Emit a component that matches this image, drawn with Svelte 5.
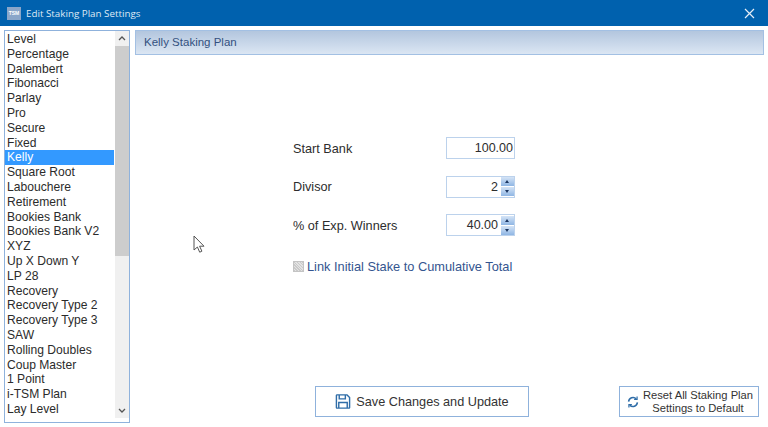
<script>
  const plans = [
    'Level', 'Percentage', 'Dalembert', 'Fibonacci', 'Parlay', 'Pro', 'Secure', 'Fixed',
    'Kelly', 'Square Root', 'Labouchere', 'Retirement', 'Bookies Bank', 'Bookies Bank V2',
    'XYZ', 'Up X Down Y', 'LP 28', 'Recovery', 'Recovery Type 2', 'Recovery Type 3', 'SAW',
    'Rolling Doubles', 'Coup Master', '1 Point', 'i-TSM Plan', 'Lay Level'
  ];
  const selected = 'Kelly';

  const fields = [
    { label: 'Start Bank', value: '100.00', spin: false },
    { label: 'Divisor', value: '2', spin: true },
    { label: '% of Exp. Winners', value: '40.00', spin: true }
  ];
</script>

<div class="window">
  <header class="titlebar">
    <span class="logo">TSM</span>
    <span class="title">Edit Staking Plan Settings</span>
    <svg class="close" width="11" height="11" viewBox="0 0 11 11">
      <path d="M1 1l9 9M10 1l-9 9" stroke="#e6eef7" stroke-width="1.2" fill="none" />
    </svg>
  </header>

  <div class="body">
    <div class="listbox">
      <ul>
        {#each plans as plan}
          <li class:selected={plan === selected}>{plan}</li>
        {/each}
      </ul>
      <div class="scrollbar">
        <svg class="arrow" width="14" height="15" viewBox="0 0 14 15">
          <path d="M4 9l3-3 3 3" stroke="#555" stroke-width="1.3" fill="none" />
        </svg>
        <div class="thumb"></div>
        <div class="track"></div>
        <svg class="arrow" width="14" height="15" viewBox="0 0 14 15">
          <path d="M4 6l3 3 3-3" stroke="#555" stroke-width="1.3" fill="none" />
        </svg>
      </div>
    </div>

    <main class="content">
      <div class="panel-head">Kelly Staking Plan</div>

      <div class="form">
        {#each fields as f}
          <div class="row">
            <span class="label">{f.label}</span>
            <div class="input">
              <span class="value">{f.value}</span>
              {#if f.spin}
                <div class="spin">
                  <span class="up"></span>
                  <span class="down"></span>
                </div>
              {/if}
            </div>
          </div>
        {/each}
        <div class="check">
          <span class="box"></span>
          <span>Link Initial Stake to Cumulative Total</span>
        </div>
      </div>

      <div class="actions">
        <button class="save">
          <svg width="16" height="17" viewBox="0 0 17 17" fill="none" stroke="#2f6da8" stroke-width="1.5">
            <path d="M1.5 2.2a.7.7 0 0 1 .7-.7h10.6l2.7 2.7v10.6a.7.7 0 0 1-.7.7H2.2a.7.7 0 0 1-.7-.7z" />
            <path d="M4.5 1.5v4.2h6.5V1.5" />
            <path d="M4 15.5V9.5h9v6" />
          </svg>
          Save Changes and Update
        </button>
        <button class="reset">
          <svg width="12" height="14" viewBox="0 0 15 16" fill="none" stroke="#2f6da8" stroke-width="1.9">
            <path d="M2 7.5A5.6 5.6 0 0 1 11.5 4" />
            <path d="M13 8.5A5.6 5.6 0 0 1 3.5 12" />
            <path d="M12.6 1v3.8H8.9" stroke-width="1.5" />
            <path d="M2.4 15v-3.8h3.7" stroke-width="1.5" />
          </svg>
          <span>Reset All Staking Plan<br />Settings to Default</span>
        </button>
      </div>
    </main>
  </div>

  <svg class="cursor" width="13" height="19" viewBox="0 0 13 19">
    <path d="M1 1v14l3.4-3 2.3 5.2 2.2-1-2.3-5h4.4z" fill="#fff" stroke="#555" stroke-width="1" />
  </svg>
</div>

<style>
  :global(body) {
    background: #fff;
  }

  .window {
    position: relative;
    width: 768px;
    height: 427px;
    overflow: hidden;
    display: flex;
    flex-direction: column;
    background: #fff;
    font-family: "Liberation Sans", Arial, sans-serif;
  }

  .titlebar {
    height: 26px;
    flex: none;
    display: flex;
    align-items: center;
    padding: 0 13px 0 7px;
    background: #0061ae;
    color: #dfe9f4;
    font-family: "Open Sans", sans-serif;
    font-size: 9.8px;
  }

  .logo {
    width: 14px;
    height: 13px;
    margin-right: 5px;
    background: #8aa6c9;
    color: #fff;
    font-family: "Liberation Sans", sans-serif;
    font-size: 5px;
    font-weight: bold;
    line-height: 13px;
    text-align: center;
  }

  .title {
    flex: 1;
  }

  .body {
    flex: 1;
    min-height: 0;
    display: flex;
    gap: 4px;
    padding: 4px;
  }

  .listbox {
    width: 126px;
    flex: none;
    display: flex;
    border: 1px solid #8fb2dc;
    box-sizing: border-box;
  }

  ul {
    flex: 1;
    margin: 0;
    padding: 1px 1px 0 0;
    list-style: none;
    font-size: 12.1px;
    color: #2b2b2b;
    overflow: hidden;
  }

  li {
    height: 14.8px;
    line-height: 15.6px;
    padding-left: 2px;
  }

  li.selected {
    background: #3399ff;
    color: #fff;
  }

  .scrollbar {
    width: 14px;
    flex: none;
    margin-bottom: 4px;
    display: flex;
    flex-direction: column;
    background: #f0f0f0;
  }

  .arrow {
    flex: none;
  }

  .thumb {
    height: 210px;
    flex: none;
    background: #cdcdcd;
  }

  .track {
    flex: 1;
  }

  .content {
    flex: 1;
    display: flex;
    flex-direction: column;
  }

  .panel-head {
    height: 25px;
    flex: none;
    box-sizing: border-box;
    margin-left: 1px;
    padding-left: 8px;
    line-height: 23px;
    border: 1px solid #a3c0e3;
    background: linear-gradient(#b3c6de, #dbe6f3);
    color: #33517f;
    font-size: 11.5px;
  }

  .form {
    flex: 1;
    width: 222px;
    margin-left: 159px;
    padding-top: 82px;
    display: flex;
    flex-direction: column;
  }

  .row {
    height: 22px;
    margin-bottom: 16.5px;
    display: flex;
    align-items: center;
    justify-content: space-between;
    font-size: 12.7px;
    color: #2d2d2d;
  }

  .label {
    padding-top: 1px;
  }

  .input {
    width: 69px;
    height: 22px;
    box-sizing: border-box;
    display: flex;
    align-items: center;
    justify-content: flex-end;
    gap: 2px;
    padding-right: 0;
    border: 1px solid #bcd2ec;
    font-size: 12.5px;
  }

  .value {
    padding-right: 1px;
  }

  .spin {
    width: 13px;
    height: 19px;
    display: flex;
    flex-direction: column;
    gap: 1px;
  }

  .spin span {
    flex: 1;
    display: block;
    background: linear-gradient(#d5e4f6, #8fb6e4);
    position: relative;
  }

  .spin span::after {
    content: "";
    position: absolute;
    left: 4px;
    top: 3px;
    border-left: 2.5px solid transparent;
    border-right: 2.5px solid transparent;
  }

  .up::after {
    border-bottom: 3px solid #1a3560;
  }

  .down::after {
    border-top: 3px solid #1a3560;
  }

  .check {
    margin-top: 6px;
    display: flex;
    align-items: center;
    gap: 3px;
    font-size: 12.8px;
    color: #34558f;
    white-space: nowrap;
  }

  .box {
    width: 9px;
    height: 9px;
    border: 1px solid #c4c4c4;
    background: repeating-linear-gradient(45deg, #c9c9c9 0 1px, #e3e3e3 1px 2px);
  }

  .actions {
    flex: none;
    display: flex;
    justify-content: space-between;
    margin: 0 5px 6px 181px;
  }

  button {
    height: 31px;
    box-sizing: border-box;
    display: flex;
    align-items: center;
    justify-content: center;
    background: #fff;
    border: 1px solid #8fb2dc;
    color: #333;
    font-family: inherit;
    padding: 0;
  }

  .save {
    width: 214px;
    gap: 5px;
    font-size: 12.7px;
  }

  .reset {
    width: 140px;
    gap: 4px;
    padding-left: 2px;
    font-size: 11.2px;
    line-height: 13px;
    text-align: center;
  }

  .cursor {
    position: absolute;
    left: 193px;
    top: 235px;
  }
</style>
